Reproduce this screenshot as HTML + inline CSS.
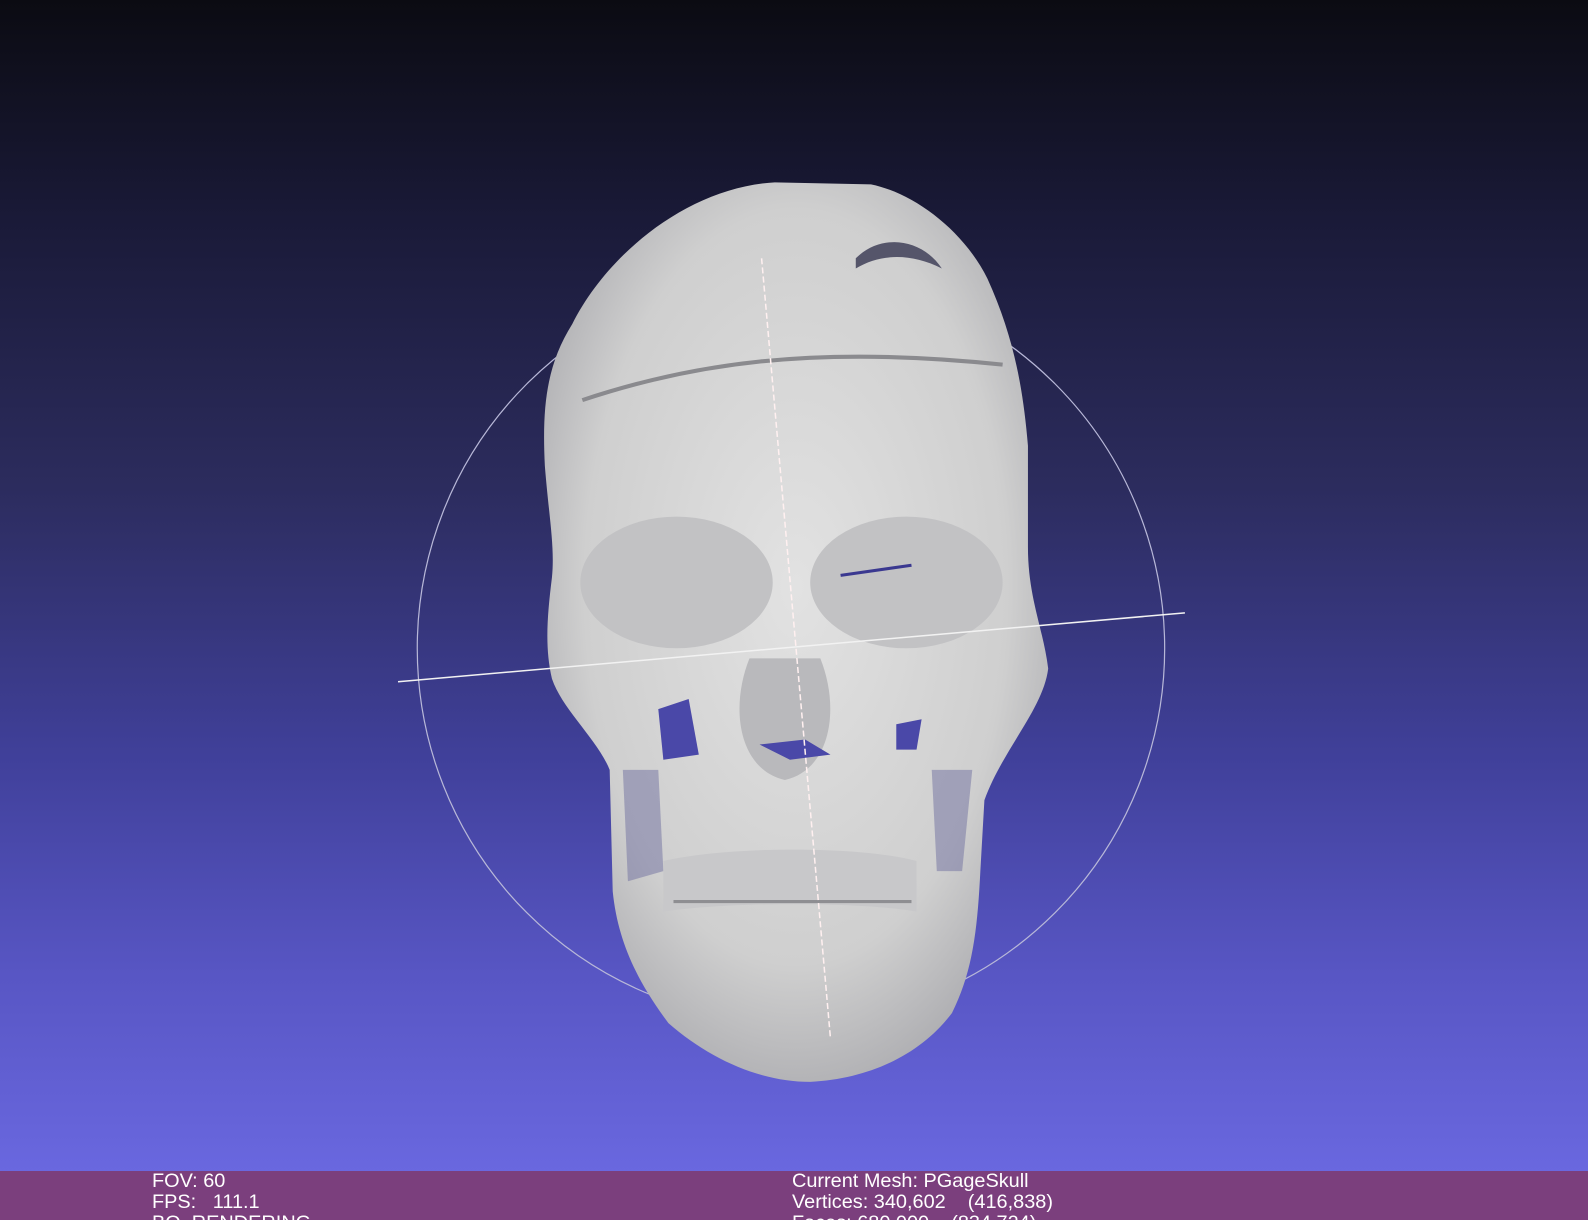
<!DOCTYPE html>
<html><head><meta charset="utf-8"><style>
html,body{margin:0;padding:0;width:1588px;height:1220px;overflow:hidden}
body{background:linear-gradient(#0b0b12 0%,#1a1a38 18%,#2c2c5e 40%,#40409a 62%,#5856c4 80%,#6e6ce6 100%);position:relative;font-family:"Liberation Sans",sans-serif}
svg{position:absolute;left:0;top:0}
.bar{position:absolute;left:0;top:1171px;width:1588px;height:49px;background:#7b3f7d;color:#fff;font-size:19.5px;line-height:21px;overflow:hidden}
.bar div{position:absolute;top:0;white-space:pre;transform:scaleX(1.02);transform-origin:left}
</style></head><body>
<svg width="1588" height="1171" viewBox="0 0 1568 1156" preserveAspectRatio="none">
<defs>
<radialGradient id="g" cx="0.5" cy="0.45" r="0.6">
<stop offset="0" stop-color="#e2e2e2"/><stop offset="0.7" stop-color="#cfcfcf"/><stop offset="1" stop-color="#a9a9ad"/>
</radialGradient>
</defs>
<circle cx="781" cy="640" r="369" fill="none" stroke="#b8b8d8" stroke-width="1.2"/>
<path d="M765,180 C680,185 600,250 565,320 C540,360 535,400 538,460 C542,510 548,540 545,570 C540,610 538,640 545,670 C555,700 590,730 602,760 L605,880 C610,930 630,970 660,1010 C700,1045 750,1068 800,1068 C860,1065 910,1040 940,1000 C960,960 965,920 968,860 L972,790 C990,740 1030,700 1035,660 C1030,620 1015,590 1015,540 L1015,440 C1010,380 1000,330 975,275 C950,225 900,190 860,182 Z" fill="url(#g)"/>
<path d="M575,395 C680,360 800,340 990,360" stroke="#8a8a8e" stroke-width="4" fill="none"/>
<path d="M845,255 C870,230 910,235 930,265 C900,250 870,250 845,265Z" fill="#55556a"/>
<ellipse cx="668" cy="575" rx="95" ry="65" fill="#c2c2c4"/>
<ellipse cx="895" cy="575" rx="95" ry="65" fill="#c2c2c4"/>
<path d="M740,650 C720,700 730,760 775,770 C820,760 830,700 810,650Z" fill="#b9b9bc"/>
<path d="M750,735 L795,730 L820,745 L780,750Z" fill="#4a48a8"/>
<path d="M650,700 L680,690 L690,745 L655,750Z" fill="#4a48a8"/>
<path d="M885,715 L910,710 L905,740 L885,740Z" fill="#4a48a8"/>
<path d="M615,760 L650,760 L655,860 L620,870Z" fill="#7070a0" opacity="0.5"/>
<path d="M920,760 L960,760 L950,860 L925,860Z" fill="#7070a0" opacity="0.5"/>
<path d="M655,850 C720,835 850,835 905,850 L905,900 C850,890 720,890 655,900Z" fill="#c8c8ca"/>
<path d="M665,890 L900,890" stroke="#8e8e92" stroke-width="3"/>
<path d="M830,568 L900,558" stroke="#3a3890" stroke-width="3"/>
<line x1="393" y1="673" x2="1170" y2="605" stroke="#f2f2f2" stroke-width="1.5"/>
<line x1="752" y1="255" x2="820" y2="1025" stroke="#fff0f0" stroke-width="1.5" stroke-dasharray="6,3"/>
</svg>
<div class="bar">
<div style="left:152px">FOV: 60
FPS:   111.1
BO_RENDERING</div>
<div style="left:792px">Current Mesh: PGageSkull
Vertices: 340,602    (416,838)
Faces: 680,000    (834,724)</div>
</div>
</body></html>
